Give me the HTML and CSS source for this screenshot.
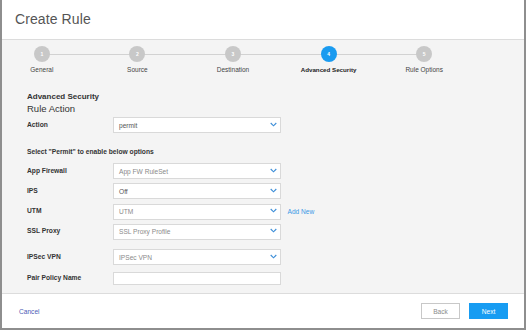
FILE: index.html
```html
<!DOCTYPE html>
<html lang="en">
<head>
<meta charset="utf-8">
<title>Create Rule</title>
<link rel="stylesheet" href="styles.css">
</head>
<body>
<div class="dialog">
  <header class="header">
    <h1 class="title">Create Rule</h1>
  </header>
  <main class="body">
    <ol class="steps">
      <li class="step"><span class="dot">1</span><span class="step-label">General</span></li>
      <li class="step"><span class="dot">2</span><span class="step-label">Source</span></li>
      <li class="step"><span class="dot">3</span><span class="step-label">Destination</span></li>
      <li class="step active"><span class="dot">4</span><span class="step-label">Advanced Security</span></li>
      <li class="step"><span class="dot">5</span><span class="step-label">Rule Options</span></li>
    </ol>
    <section class="form">
      <h2 class="section-title">Advanced Security</h2>
      <h3 class="sub-title">Rule Action</h3>
      <div class="row row-action">
        <span class="label">Action</span>
        <div class="select"><span class="value">permit</span><svg class="chev" viewBox="0 0 8 5"><polyline points="0.8,0.8 4,4 7.2,0.8"/></svg></div>
      </div>
      <p class="hint">Select "Permit" to enable below options</p>
      <div class="rows">
        <div class="row">
          <span class="label">App Firewall</span>
          <div class="select"><span class="value muted">App FW RuleSet</span><svg class="chev" viewBox="0 0 8 5"><polyline points="0.8,0.8 4,4 7.2,0.8"/></svg></div>
        </div>
        <div class="row">
          <span class="label">IPS</span>
          <div class="select"><span class="value">Off</span><svg class="chev" viewBox="0 0 8 5"><polyline points="0.8,0.8 4,4 7.2,0.8"/></svg></div>
        </div>
        <div class="row">
          <span class="label">UTM</span>
          <div class="select"><span class="value muted">UTM</span><svg class="chev" viewBox="0 0 8 5"><polyline points="0.8,0.8 4,4 7.2,0.8"/></svg></div>
          <a class="add-new">Add New</a>
        </div>
        <div class="row">
          <span class="label">SSL Proxy</span>
          <div class="select"><span class="value muted">SSL Proxy Profile</span><svg class="chev" viewBox="0 0 8 5"><polyline points="0.8,0.8 4,4 7.2,0.8"/></svg></div>
        </div>
        <div class="row row-spaced">
          <span class="label">IPSec VPN</span>
          <div class="select"><span class="value muted">IPSec VPN</span><svg class="chev" viewBox="0 0 8 5"><polyline points="0.8,0.8 4,4 7.2,0.8"/></svg></div>
        </div>
        <div class="row row-pair">
          <span class="label">Pair Policy Name</span>
          <div class="input"></div>
        </div>
      </div>
    </section>
  </main>
  <footer class="footer">
    <a class="cancel">Cancel</a>
    <div class="buttons">
      <button class="btn btn-back">Back</button>
      <button class="btn btn-next">Next</button>
    </div>
  </footer>
</div>
</body>
</html>
```
FILE: styles.css
```css
* { box-sizing: border-box; }

html, body {
  margin: 0;
  padding: 0;
  background: #ffffff;
}

body {
  font-family: "Liberation Sans", Arial, sans-serif;
  color: #333;
}

.dialog {
  width: 526px;
  height: 330px;
  display: flex;
  flex-direction: column;
  border-left: 2px solid #8e8e8e;
  border-right: 2px solid #8e8e8e;
  border-bottom: 2px solid #8e8e8e;
  background: #fff;
  overflow: hidden;
}

.header {
  height: 40px;
  flex: none;
  padding: 12px 0 0 13px;
  border-bottom: 1px solid #dcdcdc;
  background: #fff;
}

.title {
  margin: 0;
  font-size: 14px;
  line-height: 14px;
  font-weight: normal;
  color: #555;
  letter-spacing: 0.1px;
}

.body {
  flex: 1;
  min-height: 0;
  background: #f4f4f4;
  padding-top: 6px;
  overflow: hidden;
}

.steps {
  list-style: none;
  margin: 0 0 0 -8px;
  padding: 0;
  display: grid;
  grid-template-columns: repeat(5, 95.6px);
}

.step {
  position: relative;
  display: flex;
  flex-direction: column;
  align-items: center;
}

.step::after {
  content: "";
  position: absolute;
  top: 8px;
  left: 50%;
  width: 100%;
  height: 1px;
  background: #d2d2d2;
}

.step:last-child::after { display: none; }

.dot {
  position: relative;
  z-index: 1;
  width: 16px;
  height: 16px;
  border-radius: 50%;
  background: #c8c8c8;
  color: #fff;
  font-size: 5px;
  font-weight: bold;
  line-height: 16px;
  text-align: center;
}

.step.active .dot { background: #1a9bf0; }

.step-label {
  margin-top: 4px;
  font-size: 6.5px;
  line-height: 8px;
  color: #444;
  white-space: nowrap;
}

.step.active .step-label {
  color: #222;
  font-weight: bold;
  font-size: 6.2px;
}

.form {
  padding-left: 25px;
}

.section-title {
  margin: 17.5px 0 0;
  font-size: 8px;
  line-height: 10px;
  font-weight: bold;
  color: #333;
}

.sub-title {
  margin: 1.5px 0 0;
  font-size: 9.5px;
  line-height: 11px;
  font-weight: normal;
  color: #333;
}

.row {
  display: grid;
  grid-template-columns: 86px 167.5px auto;
  align-items: center;
}

.row-action { margin-top: 3px; }

.label {
  font-size: 6.7px;
  line-height: 9px;
  font-weight: bold;
  color: #333;
  padding-bottom: 2px;
  white-space: nowrap;
}

.select, .input {
  height: 16px;
  background: #fff;
  border: 1px solid #d9d9d9;
  display: flex;
  align-items: center;
  justify-content: space-between;
  padding: 0 3px 0 5px;
}

.input { height: 13px; }

.value {
  font-size: 6.6px;
  color: #555;
}

.value.muted { color: #8a8a8a; }

.chev {
  width: 7px;
  height: 5px;
  fill: none;
  stroke: #3f8fd8;
  stroke-width: 1.3;
  margin-bottom: 2px;
}

.hint {
  margin: 13.5px 0 0;
  font-size: 6.7px;
  line-height: 9px;
  font-weight: bold;
  color: #333;
}

.rows {
  margin-top: 7.5px;
  display: flex;
  flex-direction: column;
  gap: 4.3px;
}

.row-spaced { margin-top: 5px; }
.row-pair { margin-top: 2.5px; }

.add-new {
  margin-left: 7px;
  font-size: 6.6px;
  color: #3a98e6;
}

.footer {
  height: 35px;
  flex: none;
  border-top: 1px solid #dcdcdc;
  background: #fff;
  display: flex;
  align-items: center;
  justify-content: space-between;
  padding: 0 16px 0 17px;
}

.cancel {
  font-size: 6.6px;
  color: #4b5bb5;
}

.buttons {
  display: flex;
  gap: 9px;
}

.btn {
  width: 39px;
  height: 16px;
  padding: 0;
  font-family: "Liberation Sans", Arial, sans-serif;
  font-size: 6.6px;
  cursor: pointer;
}

.btn-back {
  background: #fff;
  border: 1px solid #c8c8c8;
  color: #8a8a8a;
}

.btn-next {
  background: #179cf2;
  border: none;
  color: #fff;
}
```
